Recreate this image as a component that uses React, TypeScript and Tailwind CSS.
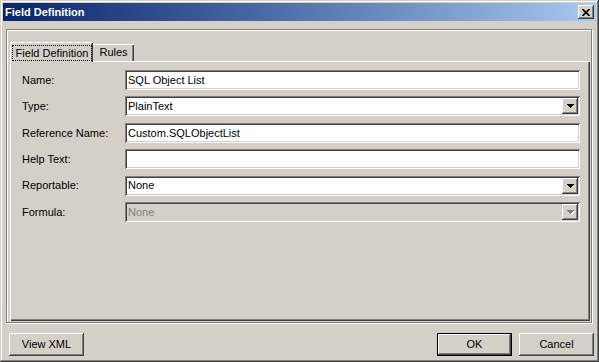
import React from "react";

const raised =
  "shadow-[inset_-1px_-1px_0_#404040,inset_1px_1px_0_#fff,inset_-2px_-2px_0_#808080,inset_2px_2px_0_#d4d0c8]";
const sunken =
  "shadow-[inset_1px_1px_0_#808080,inset_-1px_-1px_0_#fff,inset_2px_2px_0_#404040,inset_-2px_-2px_0_#d4d0c8]";

function Arrow({ disabled }: { disabled?: boolean }) {
  const d = "M0 0h7v1h-1v1h-1v1h-1v1h-1v-1h-1v-1h-1v-1h-1z";
  return (
    <svg width="8" height="5" viewBox="0 0 8 5" className="block">
      {disabled ? (
        <>
          <path d={d} fill="#fff" transform="translate(1 1)" />
          <path d={d} fill="#808080" />
        </>
      ) : (
        <path d={d} fill="#000" />
      )}
    </svg>
  );
}

function TextField({ value }: { value: string }) {
  return (
    <div className={`flex-1 h-[20px] bg-white ${sunken} flex items-center pl-[3px] text-[11px] text-black whitespace-nowrap`}>
      {value}
    </div>
  );
}

function SelectField({ value, disabled }: { value: string; disabled?: boolean }) {
  return (
    <div
      className={`flex-1 h-[20px] ${disabled ? "bg-[#d4d0c8] text-[#808080]" : "bg-white text-black"} ${sunken} flex items-center text-[11px]`}
    >
      <span className="flex-1 pl-[3px] whitespace-nowrap">{value}</span>
      <div className={`mr-[2px] w-[16px] h-[16px] bg-[#d4d0c8] ${raised} flex items-center justify-center pl-[1px] pt-[1px]`}>
        <Arrow disabled={disabled} />
      </div>
    </div>
  );
}

function Row({ label, children }: { label: string; children: React.ReactNode }) {
  return (
    <div className="flex items-center h-[20px]">
      <div className="w-[103px] text-[11px] text-black whitespace-nowrap">{label}</div>
      {children}
    </div>
  );
}

function Button({ label, isDefault }: { label: string; isDefault?: boolean }) {
  return (
    <div
      className={`w-[75px] h-[23px] bg-[#d4d0c8] ${isDefault ? "border border-black" : ""} ${raised} flex items-center justify-center text-[11px] text-black`}
    >
      {label}
    </div>
  );
}

export default function App() {
  return (
    <div className="w-[599px] h-[362px] bg-[#d4d0c8] p-[3px] font-['Liberation_Sans',Arial,sans-serif] shadow-[inset_-1px_-1px_0_#404040,inset_1px_1px_0_#d4d0c8,inset_-2px_-2px_0_#808080,inset_2px_2px_0_#fff] flex flex-col">
      {/* title bar */}
      <div className="h-[18px] bg-linear-to-r from-[#0a246a] to-[#a6caf0] flex items-center justify-between pl-[2px] pr-[2px]">
        <span className="text-white font-bold text-[11px] whitespace-nowrap">Field Definition</span>
        <div className={`w-[16px] h-[14px] bg-[#d4d0c8] ${raised} flex items-center justify-center`}>
          <svg width="8" height="7" viewBox="0 0 8 7" className="block">
            <path d="M0.5 0 L7.5 7 M7.5 0 L0.5 7" stroke="#000" strokeWidth="1.6" />
          </svg>
        </div>
      </div>

      {/* group frame */}
      <div className="mt-[8px] ml-[3px] w-[586px] h-[294px] border border-[#808080] shadow-[inset_1px_1px_0_#fff,1px_1px_0_#fff] pl-[3px] pt-[12px] pb-[1px] flex flex-col">
        <div className="w-[580px] flex-1 flex flex-col">
          {/* tabs */}
          <div className="h-[19px] flex items-end">
            <div className="relative z-10 -mb-px w-[83px] h-[20px] bg-[#d4d0c8] shadow-[inset_1px_1px_0_#fff,inset_-1px_0_0_#404040,inset_-2px_0_0_#808080] rounded-tl-[2px] pt-[3px] pl-[2px] pr-[1px] pb-[1px] flex">
              <div className="flex-1 border border-dotted border-black flex items-center justify-center text-[11px] text-black whitespace-nowrap">
                Field Definition
              </div>
            </div>
            <div className="w-[41px] h-[17px] shadow-[inset_0_1px_0_#fff,inset_-1px_0_0_#404040,inset_-2px_0_0_#808080] flex items-center justify-center text-[11px] text-black">
              Rules
            </div>
          </div>

          {/* tab panel */}
          <div className="flex-1 shadow-[inset_1px_1px_0_#fff,inset_-1px_-1px_0_#404040,inset_-2px_-2px_0_#808080] pl-[12px] pr-[10px] pt-[9px] flex flex-col gap-[6.4px]">
            <Row label="Name:">
              <TextField value="SQL Object List" />
            </Row>
            <Row label="Type:">
              <SelectField value="PlainText" />
            </Row>
            <Row label="Reference Name:">
              <TextField value="Custom.SQLObjectList" />
            </Row>
            <Row label="Help Text:">
              <TextField value="" />
            </Row>
            <Row label="Reportable:">
              <SelectField value="None" />
            </Row>
            <Row label="Formula:">
              <SelectField value="None" disabled />
            </Row>
          </div>
        </div>
      </div>

      {/* buttons */}
      <div className="mt-[10px] ml-[6px] mr-[2px] flex items-center">
        <Button label="View XML" />
        <div className="flex-1" />
        <Button label="OK" isDefault />
        <div className="w-[7px]" />
        <Button label="Cancel" />
      </div>
    </div>
  );
}
